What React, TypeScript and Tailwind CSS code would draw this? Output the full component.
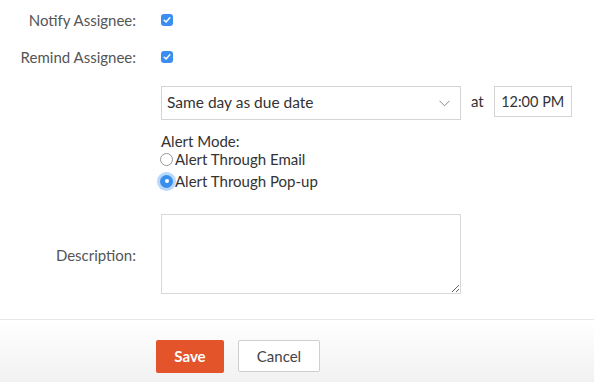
import React from "react";

function Check() {
  return (
    <span className="flex h-[12px] w-[12px] items-center justify-center rounded-[3px] bg-[#3a8ef0]">
      <svg width="8" height="8" viewBox="0 0 8 8" fill="none">
        <path d="M1.2 4.2 L3.1 6 L6.8 1.8" stroke="white" strokeWidth="1.5" strokeLinecap="round" strokeLinejoin="round" />
      </svg>
    </span>
  );
}

export default function App() {
  const font = { fontFamily: "Lato, 'Open Sans', sans-serif" };
  return (
    <div className="h-[382px] w-[594px] bg-white" style={font}>
      <div className="pt-[10px]">
        <div className="flex h-[20px] items-center">
          <div className="w-[136px] text-right text-[15px] text-[#555]">Notify Assignee:</div>
          <div className="ml-[25px]"><Check /></div>
        </div>
        <div className="mt-[17px] flex h-[20px] items-center">
          <div className="w-[136px] text-right text-[15px] text-[#555]">Remind Assignee:</div>
          <div className="ml-[25px]"><Check /></div>
        </div>
        <div className="ml-[161px] mt-[19px] flex items-start">
          <div className="flex h-[34px] w-[300px] items-center justify-between border border-[#d4d4d4] pl-[5px] pr-[10px] text-[15.5px] text-[#333]">
            <span>Same day as due date</span>
            <svg width="11" height="7" viewBox="0 0 11 7" fill="none">
              <path d="M0.5 0.8 L5.5 5.8 L10.5 0.8" stroke="#888" strokeWidth="1" />
            </svg>
          </div>
          <span className="ml-[10px] mt-[4px] text-[15px] text-[#333]">at</span>
          <div className="ml-[10px] flex h-[31px] w-[78px] items-center justify-center border border-[#d4d4d4] text-[14.5px] text-[#333]">
            12:00 PM
          </div>
        </div>
        <div className="ml-[161px] mt-[12px] flex h-[18px] items-center text-[15px] text-[#333]">Alert Mode:</div>
        <div className="ml-[160px] flex h-[18px] items-center text-[15px] text-[#333]">
          <span className="h-[13px] w-[13px] rounded-full border border-[#9a9a9a] bg-white" />
          <span className="ml-[2px]">Alert Through Email</span>
        </div>
        <div className="ml-[160px] mt-[4px] flex h-[18px] items-center text-[15px] text-[#333]">
          <span className="flex h-[13px] w-[13px] items-center justify-center rounded-full bg-[#3a8ef0] shadow-[0_0_0_3px_rgba(58,142,240,0.35)]">
            <span className="h-[4px] w-[4px] rounded-full bg-white" />
          </span>
          <span className="ml-[2px]">Alert Through Pop-up</span>
        </div>
        <div className="mt-[24px] flex items-center">
          <div className="w-[136px] pt-[2px] text-right text-[15px] text-[#555]">Description:</div>
          <textarea className="ml-[25px] block h-[80px] w-[300px] border border-[#d8d8d8] outline-none" />
        </div>
      </div>
      <div className="mt-[25px] h-[63px] border-t border-[#e6e6e6] bg-gradient-to-b from-white to-[#f1f1f1] pl-[156px] pt-[20px]">
        <div className="flex items-start gap-[14px]">
          <button className="h-[33px] w-[68px] rounded-[2px] bg-[#e4542b] text-[15px] font-bold text-white">Save</button>
          <button className="h-[32px] w-[82px] rounded-[2px] border border-[#cfcfcf] bg-white text-[15px] text-[#444]">Cancel</button>
        </div>
      </div>
    </div>
  );
}
